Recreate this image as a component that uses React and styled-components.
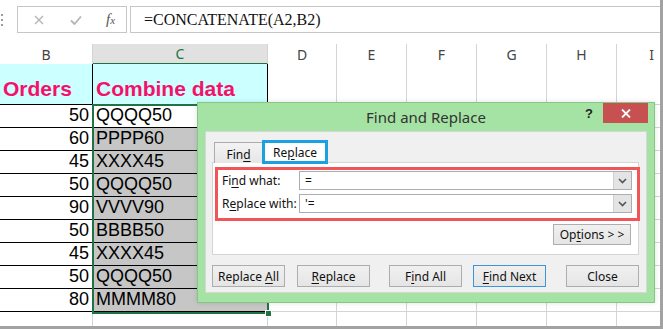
import React from "react";
import styled, { createGlobalStyle } from "styled-components";

const GlobalStyle = createGlobalStyle`
  html, body {
    margin: 0;
    padding: 0;
    background: #fff;
  }
  body {
    font-family: "Liberation Sans", Arial, sans-serif;
  }
`;

const COLS = "93px 175px 69px 70px 70px 70px 70px 70px";
const LETTERS = ["B", "C", "D", "E", "F", "G", "H", "I"];
const ROWS = [
  [50, "QQQQ50"],
  [60, "PPPP60"],
  [45, "XXXX45"],
  [50, "QQQQ50"],
  [90, "VVVV90"],
  [50, "BBBB50"],
  [45, "XXXX45"],
  [50, "QQQQ50"],
  [80, "MMMM80"],
];

const U = styled.span`
  text-decoration: underline;
  text-underline-offset: 2px;
`;

const Screen = styled.div`
  position: relative;
  width: 660px;
  height: 326px;
  overflow: hidden;
  border-right: 3px solid #a2a2a2;
  border-bottom: 3px solid #a2a2a2;
  background: #fff;
`;

const FormulaBar = styled.div`
  display: flex;
  align-items: stretch;
  height: 27px;
  padding: 6px 0 11px 0;
`;

const Grip = styled.div`
  width: 17px;
  display: flex;
  flex-direction: column;
  justify-content: center;
  gap: 3px;
  padding-left: 1px;
  box-sizing: border-box;

  span {
    width: 2px;
    height: 2px;
    background: #9a9a9a;
  }
`;

const ToolBox = styled.div`
  box-sizing: border-box;
  width: 110px;
  border: 1px solid #c6c6c6;
  display: flex;
  align-items: center;
  padding-left: 16px;
  gap: 26px;
`;

const Fx = styled.span`
  font-family: "Liberation Serif", "Times New Roman", serif;
  font-style: italic;
  font-size: 15px;
  color: #555;
  margin-left: -2px;

  sub {
    font-size: 11px;
    vertical-align: 0;
  }
`;

const FormulaInput = styled.div`
  flex: 1;
  margin-left: 3px;
  border: 1px solid #c6c6c6;
  border-right: none;
  display: flex;
  align-items: center;
  padding-left: 13px;
  font-family: "Liberation Serif", "Times New Roman", serif;
  font-size: 16px;
  color: #111;
`;

const SheetRow = styled.div`
  display: grid;
  grid-template-columns: ${COLS};
  height: ${(p) => p.$h}px;
`;

const HeadCell = styled.div`
  box-sizing: border-box;
  display: flex;
  align-items: center;
  justify-content: center;
  font-family: "Noto Sans", "Open Sans", sans-serif;
  font-size: 14px;
  color: ${(p) => (p.$active ? "#217346" : "#444")};
  background: ${(p) => (p.$active ? "#e1e1e1" : "#fff")};
  border-right: 1px solid #d4d4d4;
  border-bottom: ${(p) => (p.$active ? "2px solid #217346" : "1px solid #ababab")};
`;

const Cell = styled.div`
  box-sizing: border-box;
  display: flex;
  align-items: flex-end;
  justify-content: ${(p) => (p.$right ? "flex-end" : "flex-start")};
  padding: 0 3px 1px 3px;
  background: ${(p) => p.$bg || "#fff"};
  border-right: 1px solid ${(p) => p.$line || "#d4d4d4"};
  border-bottom: 1px solid ${(p) => p.$line || "#d4d4d4"};
  font-family: "Liberation Sans", Arial, sans-serif;
  font-size: 18px;
  line-height: 21px;
  color: #000;
  white-space: nowrap;
  overflow: hidden;
`;

const Title = styled.span`
  font-family: "Liberation Sans", Arial, sans-serif;
  font-weight: bold;
  font-size: 21px;
  line-height: 26px;
  color: #f5116a;
  padding-bottom: 1px;
`;

const Selection = styled.div`
  position: absolute;
  left: 92px;
  top: 104px;
  width: 177px;
  height: 210px;
  box-sizing: border-box;
  border: 2px solid #217346;
  pointer-events: none;

  &::after {
    content: "";
    position: absolute;
    right: -5px;
    bottom: -5px;
    width: 5px;
    height: 5px;
    background: #217346;
    border: 1px solid #fff;
  }
`;

/* ---------- dialog ---------- */

const Dialog = styled.div`
  position: absolute;
  left: 197px;
  top: 102px;
  width: 458px;
  height: 201px;
  box-sizing: border-box;
  background: #a5e3a5;
  border: 1px solid #86c786;
  display: flex;
  flex-direction: column;
  font-family: "Noto Sans", "Open Sans", sans-serif;
  box-shadow: 0 0 5px rgba(0, 0, 0, 0.12);
`;

const TitleBar = styled.div`
  height: 28px;
  display: grid;
  grid-template-columns: 1fr auto 1fr;
  align-items: start;
`;

const DialogTitle = styled.div`
  grid-column: 2;
  font-size: 15px;
  line-height: 28px;
  color: #333;
`;

const TitleButtons = styled.div`
  grid-column: 3;
  justify-self: end;
  display: flex;
  align-items: center;
  margin-right: 6px;
`;

const Help = styled.span`
  font-family: "Liberation Sans", Arial, sans-serif;
  font-weight: bold;
  font-size: 13px;
  color: #222;
  margin-right: 10px;
`;

const CloseBtn = styled.div`
  width: 45px;
  height: 20px;
  background: #c75050;
  display: flex;
  align-items: center;
  justify-content: center;
`;

const Body = styled.div`
  flex: 1;
  margin: 0 7px 9px 7px;
  background: #f0f0f0;
  border: 1px solid #d6d6d6;
  padding: 8px 7px 5px 6px;
  display: flex;
  flex-direction: column;
`;

const TabStrip = styled.div`
  display: flex;
  align-items: flex-end;
  height: 23px;
  padding-left: 2px;
  position: relative;
  z-index: 1;
`;

const Tab = styled.div`
  box-sizing: border-box;
  display: flex;
  align-items: center;
  justify-content: center;
  font-size: 12px;
  color: #111;
  ${(p) =>
    p.$selected
      ? `
    width: 66px;
    height: 24px;
    margin-bottom: -1px;
    margin-left: -1px;
    background: #fff;
    border: 3px solid #1ba1e2;
    padding-top: 1px;
  `
      : `
    width: 49px;
    height: 21px;
    background: linear-gradient(#f3f3f3, #e6e6e6);
    border: 1px solid #acacac;
    border-bottom: none;
    padding-top: 2px;
  `}
`;

const Panel = styled.div`
  box-sizing: border-box;
  height: 93px;
  margin-top: -1px;
  background: #fff;
  border: 1px solid #d5d5d5;
  padding: 4px 0 0 2px;
  display: flex;
  flex-direction: column;
`;

const RedBox = styled.div`
  box-sizing: border-box;
  width: 425px;
  height: 54px;
  border: 3px solid #f25555;
  padding: 1px 5px 0 4px;
  display: flex;
  flex-direction: column;
  gap: 4px;
`;

const FieldRow = styled.div`
  display: flex;
  align-items: center;
  height: 19px;
`;

const Label = styled.div`
  width: 77px;
  font-size: 12px;
  color: #111;
`;

const Combo = styled.div`
  box-sizing: border-box;
  flex: 1;
  height: 19px;
  border: 1px solid #abadb3;
  display: flex;
  align-items: center;
  padding-left: 5px;
  font-size: 12px;
  color: #111;
  background: #fff;
`;

const ComboText = styled.span`
  flex: 1;
`;

const Drop = styled.div`
  width: 17px;
  height: 17px;
  background: #e4e4e4;
  border-left: 1px solid #cfcfcf;
  display: flex;
  align-items: center;
  justify-content: center;
`;

const OptionsRow = styled.div`
  display: flex;
  justify-content: flex-end;
  margin-top: 3px;
  padding-right: 7px;
`;

const Button = styled.div`
  box-sizing: border-box;
  width: ${(p) => p.$w || 73}px;
  height: ${(p) => p.$h || 22}px;
  margin-left: ${(p) => p.$ml || 0}px;
  border: 1px solid ${(p) => (p.$focus ? "#3c95e0" : "#adadad")};
  background: linear-gradient(#f0f0f0, #e5e5e5);
  display: flex;
  align-items: center;
  justify-content: center;
  font-size: 12px;
  color: #111;
  white-space: pre;
`;

const ButtonRow = styled.div`
  display: flex;
  margin-top: 10px;
`;

const Chevron = () => (
  <svg width="9" height="6" viewBox="0 0 9 6">
    <polyline points="1,1 4.5,4.5 8,1" fill="none" stroke="#555" strokeWidth="1.6" />
  </svg>
);

const App = () => {
  return (
    <>
      <GlobalStyle />
      <Screen>
        <FormulaBar>
          <Grip>
            <span />
            <span />
            <span />
          </Grip>
          <ToolBox>
            <svg width="10" height="10" viewBox="0 0 10 10">
              <path d="M1 1 L9 9 M9 1 L1 9" stroke="#b5b5b5" strokeWidth="1.4" />
            </svg>
            <svg width="12" height="10" viewBox="0 0 12 10">
              <path d="M1 5.5 L4.5 9 L11 1.5" fill="none" stroke="#b5b5b5" strokeWidth="1.8" />
            </svg>
            <Fx>
              f<sub>x</sub>
            </Fx>
          </ToolBox>
          <FormulaInput>=CONCATENATE(A2,B2)</FormulaInput>
        </FormulaBar>

        <SheetRow $h={20}>
          {LETTERS.map((l) => (
            <HeadCell key={l} $active={l === "C"}>
              {l}
            </HeadCell>
          ))}
        </SheetRow>

        <SheetRow $h={41}>
          <Cell $bg="#ccffff" $line="#000">
            <Title>Orders</Title>
          </Cell>
          <Cell $bg="#ccffff" $line="#000">
            <Title>Combine data</Title>
          </Cell>
          {LETTERS.slice(2).map((l) => (
            <Cell key={l} />
          ))}
        </SheetRow>

        {ROWS.map(([n, s], i) => (
          <SheetRow key={i} $h={23}>
            <Cell $right $line="#000">
              {n}
            </Cell>
            <Cell $line="#000" $bg={i === 0 ? "#fff" : "#c6c6c6"}>
              {s}
            </Cell>
            {LETTERS.slice(2).map((l) => (
              <Cell key={l} />
            ))}
          </SheetRow>
        ))}

        <SheetRow $h={23}>
          {LETTERS.map((l) => (
            <Cell key={l} />
          ))}
        </SheetRow>

        <Selection />

        <Dialog>
          <TitleBar>
            <DialogTitle>Find and Replace</DialogTitle>
            <TitleButtons>
              <Help>?</Help>
              <CloseBtn>
                <svg width="10" height="9" viewBox="0 0 10 9">
                  <path d="M1 0.5 L9 8.5 M9 0.5 L1 8.5" stroke="#fff" strokeWidth="1.8" />
                </svg>
              </CloseBtn>
            </TitleButtons>
          </TitleBar>
          <Body>
            <TabStrip>
              <Tab>
                <span>
                  Fin<U>d</U>
                </span>
              </Tab>
              <Tab $selected>
                <span>
                  Re<U>p</U>lace
                </span>
              </Tab>
            </TabStrip>
            <Panel>
              <RedBox>
                <FieldRow>
                  <Label>
                    Fi<U>n</U>d what:
                  </Label>
                  <Combo>
                    <ComboText>=</ComboText>
                    <Drop>
                      <Chevron />
                    </Drop>
                  </Combo>
                </FieldRow>
                <FieldRow>
                  <Label>
                    R<U>e</U>place with:
                  </Label>
                  <Combo>
                    <ComboText>'=</ComboText>
                    <Drop>
                      <Chevron />
                    </Drop>
                  </Combo>
                </FieldRow>
              </RedBox>
              <OptionsRow>
                <Button $w={78} $h={21}>
                  <span>
                    Op<U>t</U>ions &gt; &gt;
                  </span>
                </Button>
              </OptionsRow>
            </Panel>
            <ButtonRow>
              <Button>
                <span>
                  Replace <U>A</U>ll
                </span>
              </Button>
              <Button $ml={12}>
                <span>
                  <U>R</U>eplace
                </span>
              </Button>
              <Button $ml={19}>
                <span>
                  F<U>i</U>nd All
                </span>
              </Button>
              <Button $ml={11} $focus>
                <span>
                  <U>F</U>ind Next
                </span>
              </Button>
              <Button $ml={20}>
                <span>Close</span>
              </Button>
            </ButtonRow>
          </Body>
        </Dialog>
      </Screen>
    </>
  );
};

export default App;
